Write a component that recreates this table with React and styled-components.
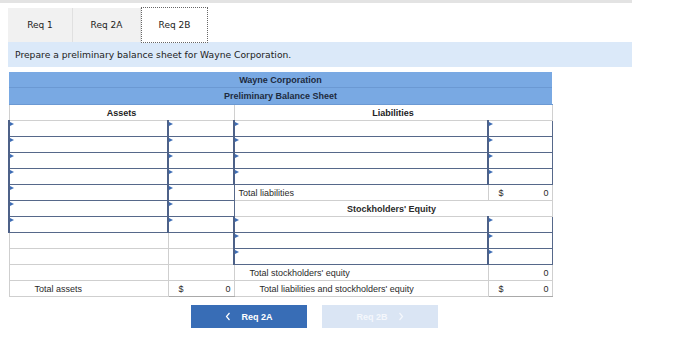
import styled, { createGlobalStyle, css } from "styled-components";

const GlobalStyle = createGlobalStyle`
  body {
    margin: 0;
    background: #fff;
    font-family: "Liberation Sans", Arial, sans-serif;
  }
`;

const Page = styled.div`
  width: 700px;
  height: 362px;
  overflow: hidden;
`;

const TopRule = styled.div`
  width: 632px;
  height: 3px;
  background: #e3e3e3;
`;

const TabStrip = styled.div`
  display: flex;
  margin: 5px 0 0 8px;
  height: 34px;
`;

const Tab = styled.div`
  width: ${(p) => p.$w}px;
  display: flex;
  align-items: center;
  justify-content: center;
  font-family: "DejaVu Sans", Verdana, sans-serif;
  font-size: 9px;
  color: #222;
  background: #f1f1f1;
  border-right: 1px solid #e0e0e0;
  box-sizing: border-box;
  ${(p) =>
    p.$active &&
    css`
      background: #fff;
      border: 1px dotted #666;
      margin-top: -1px;
      height: 36px;
    `}
`;

const Prompt = styled.div`
  margin-left: 8px;
  width: 624px;
  height: 25px;
  box-sizing: border-box;
  padding-left: 7px;
  display: flex;
  align-items: center;
  background: #dbe9f9;
  font-family: "DejaVu Sans", Verdana, sans-serif;
  font-size: 9.2px;
  color: #222;
`;

const Sheet = styled.table`
  margin: 5px 0 0 8px;
  width: 543px;
  table-layout: fixed;
  border-collapse: collapse;
  font-size: 9px;
  color: #2a2a2a;
`;

const TitleCell = styled.td`
  height: ${(p) => p.$h}px;
  padding: 0;
  background: #79a9e3;
  border-bottom: 1px solid #6b99d3;
  text-align: center;
  font-weight: bold;
  color: #1d2b40;
`;

const HeadCell = styled.td`
  height: 15px;
  padding: 0;
  text-align: center;
  font-weight: bold;
  color: #222;
  border: 1px solid #d0d0d0;
  border-top: none;
`;

const InputCell = styled.td`
  position: relative;
  height: 15px;
  padding: 0;
  background: #fff;
  border: 1px solid #56688a;
  border-left: 2px solid #4d6188;

  &::before {
    content: "";
    position: absolute;
    left: 0;
    top: 1px;
    border-top: 2.5px solid transparent;
    border-bottom: 2.5px solid transparent;
    border-left: 4px solid #3e6db5;
  }
`;

const PlainCell = styled.td`
  height: 15px;
  padding: 0 3px 0 ${(p) => p.$indent || 0}px;
  border: 1px solid #cfcfcf;
  white-space: nowrap;
  text-align: ${(p) => (p.$center ? "center" : "left")};
  font-weight: ${(p) => (p.$bold ? "bold" : "normal")};
`;

const AmountCell = styled.td`
  height: 15px;
  padding: 0 3px 0 10px;
  border: 1px solid #cfcfcf;
  border-bottom-color: ${(p) => (p.$last ? "#a9a9a9" : "#cfcfcf")};
`;

const Amount = styled.div`
  display: flex;
  justify-content: space-between;
`;

const Buttons = styled.div`
  display: flex;
  gap: 15px;
  margin: 8px 0 0 191px;
`;

const NavButton = styled.div`
  width: 116px;
  height: 23px;
  display: flex;
  align-items: center;
  justify-content: center;
  gap: 10px;
  font-size: 9px;
  font-weight: bold;
  color: #fff;
  background: ${(p) => (p.$disabled ? "#dae5f4" : "#386db6")};
  ${(p) =>
    p.$disabled &&
    css`
      color: #f4f7fc;
    `}
`;

const Chevron = ({ dir }) => (
  <svg width="6" height="9" viewBox="0 0 6 9">
    <path
      d={dir === "left" ? "M4.5 1 L1.5 4.5 L4.5 8" : "M1.5 1 L4.5 4.5 L1.5 8"}
      fill="none"
      stroke="currentColor"
      strokeWidth="1.2"
    />
  </svg>
);

const Money = ({ value, dollar, last }) => (
  <AmountCell $last={last}>
    <Amount>
      <span>{dollar ? "$" : ""}</span>
      <span>{value}</span>
    </Amount>
  </AmountCell>
);

const rows = [
  { left: "input", right: "input" },
  { left: "input", right: "input" },
  { left: "input", right: "input" },
  { left: "input", right: "input" },
  { left: "input", right: { label: "Total liabilities", indent: 4, dollar: true, value: 0 } },
  { left: "input", right: "section" },
  { left: "input", right: "input" },
  { left: "blank", right: "input" },
  { left: "blank", right: "input" },
  { left: "blank", right: { label: "Total stockholders' equity", indent: 15, value: 0 } },
  {
    left: { label: "Total assets", indent: 25, dollar: true, value: 0 },
    right: { label: "Total liabilities and stockholders' equity", indent: 25, dollar: true, value: 0 },
    last: true,
  },
];

const Side = ({ spec, last }) => {
  if (spec === "input") {
    return (
      <>
        <InputCell />
        <InputCell />
      </>
    );
  }
  if (spec === "blank") {
    return (
      <>
        <PlainCell />
        <PlainCell />
      </>
    );
  }
  if (spec === "section") {
    return (
      <PlainCell colSpan={2} $center $bold>
        Stockholders' Equity
      </PlainCell>
    );
  }
  return (
    <>
      <PlainCell $indent={spec.indent}>{spec.label}</PlainCell>
      <Money value={spec.value} dollar={spec.dollar} last={last} />
    </>
  );
};

export default function App() {
  return (
    <Page>
      <GlobalStyle />
      <TopRule />
      <TabStrip>
        <Tab $w={65}>Req 1</Tab>
        <Tab $w={68}>Req 2A</Tab>
        <Tab $w={67} $active>
          Req 2B
        </Tab>
      </TabStrip>
      <Prompt>Prepare a preliminary balance sheet for Wayne Corporation.</Prompt>
      <Sheet>
        <colgroup>
          <col style={{ width: 159 }} />
          <col style={{ width: 66 }} />
          <col style={{ width: 254 }} />
          <col style={{ width: 64 }} />
        </colgroup>
        <tbody>
          <tr>
            <TitleCell colSpan={4} $h={15}>
              Wayne Corporation
            </TitleCell>
          </tr>
          <tr>
            <TitleCell colSpan={4} $h={16}>
              Preliminary Balance Sheet
            </TitleCell>
          </tr>
          <tr>
            <HeadCell colSpan={2}>Assets</HeadCell>
            <HeadCell colSpan={2}>Liabilities</HeadCell>
          </tr>
          {rows.map((row, i) => (
            <tr key={i}>
              <Side spec={row.left} last={row.last} />
              <Side spec={row.right} last={row.last} />
            </tr>
          ))}
        </tbody>
      </Sheet>
      <Buttons>
        <NavButton>
          <Chevron dir="left" />
          Req 2A
        </NavButton>
        <NavButton $disabled>
          Req 2B
          <Chevron dir="right" />
        </NavButton>
      </Buttons>
    </Page>
  );
}
